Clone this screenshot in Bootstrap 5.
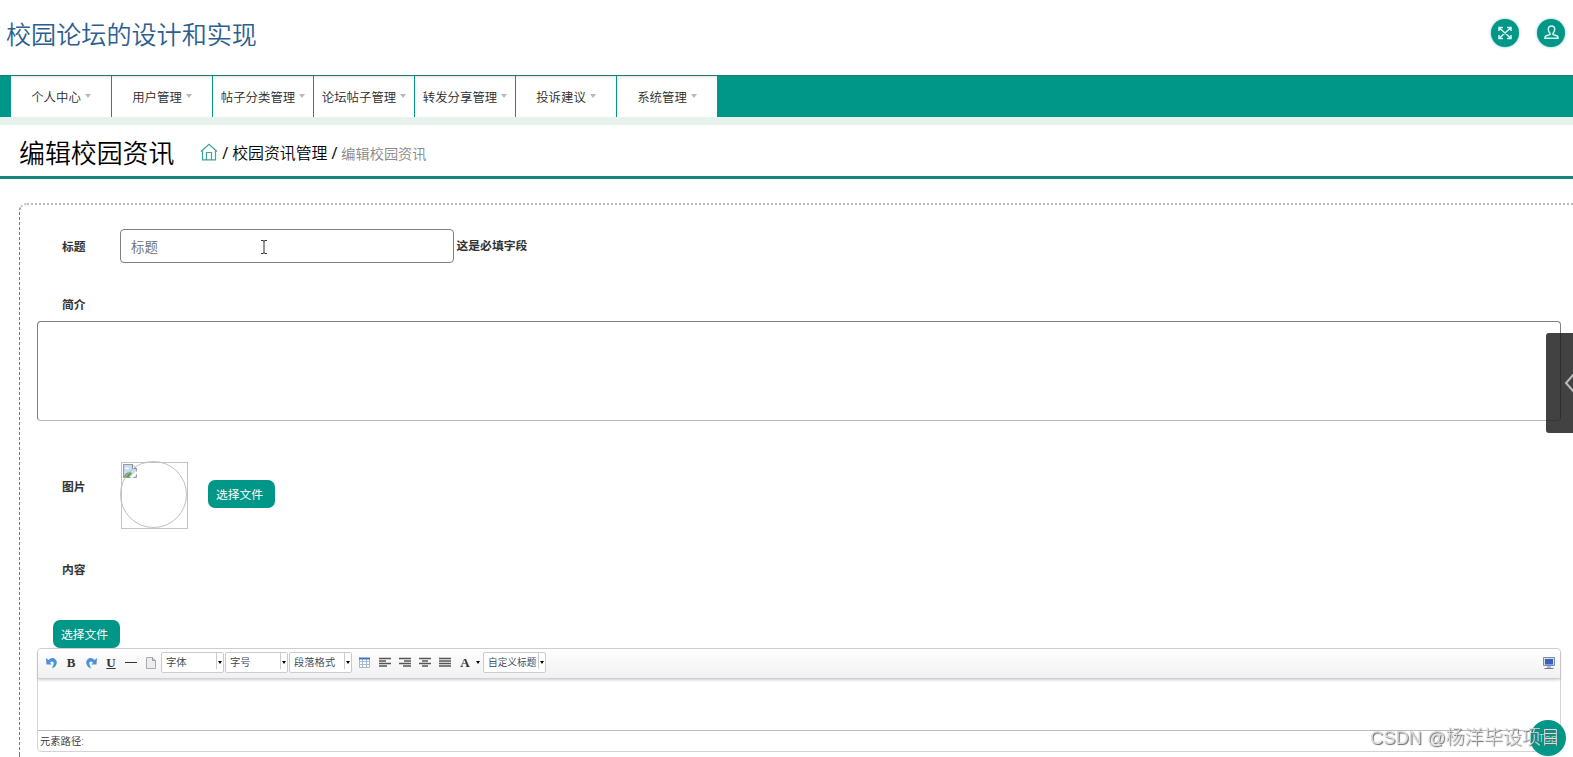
<!DOCTYPE html>
<html lang="zh-CN">
<head>
<meta charset="utf-8">
<meta name="viewport" content="width=device-width, initial-scale=1">
<title>校园论坛的设计和实现</title>
<link href="https://cdn.jsdelivr.net/npm/bootstrap@5.3.0/dist/css/bootstrap.min.css" rel="stylesheet">
<style>
:root{--teal:#009688}
html,body{height:757px;overflow:hidden}
body{font-family:"Open Sans","Noto Sans CJK SC",sans-serif;font-size:12px;line-height:1.5;color:#333;background:#fff;display:flex;flex-direction:column}
svg{display:block;flex:none}
.site-head{height:75px;padding:0 8px 5px 6px;flex:none}
.site-name{font-size:25.1px;font-weight:350;color:#2b5f90;line-height:1}
.round-btn{width:28px;height:28px;background:var(--teal);box-shadow:0 0 3px #00968888;margin-bottom:5px}
.main-nav{height:42px;background:var(--teal);border-top:1px solid #17806f;padding-left:11px;flex:none}
.main-nav .nav-link{width:100px;height:41px;margin-right:1px;padding:3px 0 0 0;background:#fff;color:#2a2a2a;font-size:12.4px;font-weight:350;box-shadow:inset 0 3px 3px -2px #0002}
.main-nav .nav-item:last-child .nav-link{margin-right:0}
.tri{width:0;height:0;border:3.5px solid transparent;border-top:4px solid #b9b9b9;border-bottom:0;margin:-4px 0 0 4px}
.strip{height:8px;background:#e7f2ec;flex:none}
.page-head{height:54px;border-bottom:3px solid #158a7c;padding:7px 0 0 19px;flex:none}
.page-head h1{font-size:25.9px;font-weight:350;color:#000;line-height:1;margin:0 26px 0 0}
.crumb-row{font-size:15.9px;font-weight:350;color:#000;line-height:1;white-space:pre}
.crumb-row .slash{margin:0 4px;font-weight:400}
.crumb-row .current{font-size:14.2px;color:#888}
.panel{flex:1;min-height:0;overflow:hidden;margin:24px 0 0 19px;border:1px dashed #777;border-top:2px dotted #bcbcbc;border-width:2px 0 0 1px;border-radius:8px 0 0 0;padding:24px 0 0 17px}
.lab{font-size:11.8px;font-weight:700;color:#333;line-height:18px;width:83px;padding-left:25px;flex:none}
.title-input{width:334px;height:34px;font-size:13.5px;font-weight:350;border:1px solid #808080;border-radius:4px;padding:1px 10px 0;color:#333}
.title-input::placeholder{color:#6c6c6c}
.must{font-size:11.8px;font-weight:700;margin-left:2.5px}
.ibeam{left:223px;top:10px}
.intro{height:100px;width:1524px;border:1px solid #808080;border-bottom:1.5px solid #bbb;border-radius:4px;resize:none;margin-top:8px}
.thumb{width:67px;height:67px;border:1px solid #c3c3c3;margin-left:1px}
.thumb-ring{left:-2px;top:-2px;width:67px;height:67px;border:1px solid #c0c0c0}
.pick{width:67px;height:28px;background:var(--teal)!important;color:#fff!important;border:0;border-radius:7px;font-size:11.8px;line-height:28px;padding:0 4px 0 0}
.editor{width:1524px;height:104px;border:1px solid #d4d4d4;border-radius:4px;background:#fff}
.tools{height:30px;background:linear-gradient(#fff,#f1f0f2);border-bottom:1px solid #d0d0d0;border-radius:4px 4px 0 0;box-shadow:0 1px 3px #0003;padding:0 4px 2px 3px}
.tool{width:20px;height:20px;font:bold 13px/20px "Liberation Serif",serif;color:#333;flex:none}
.combo{width:63px;height:21px;background:#fff;border:1px solid #ccc;border-radius:2px;font-size:10.3px;color:#34434f;font-weight:350;margin-right:1px;line-height:19px;padding-left:4px}
.combo .txt{width:50px;white-space:nowrap;flex:none}
.combo .arrow{width:8px;height:16px;border-left:1px solid #ccc}
.arrow::after{content:"";border:2.5px solid transparent;border-top:3px solid #000;border-bottom:0}
.combo .arrow::after{margin-top:3px}
.path-row{height:21px;border-top:1px solid #bbb;font-size:10.3px;font-weight:350;line-height:20px;padding-left:2px;color:#333}
.side-tab{right:0;top:333px;width:27px;height:100px;background:rgba(30,30,30,.84);border-radius:3px 0 0 3px}
.top-btn{right:7px;bottom:1px;width:36px;height:36px;background:var(--teal);color:#dff;font-size:11px;font-weight:300}
.watermark{right:13px;bottom:6px;font:300 19.1px/26px "Liberation Sans","Noto Sans CJK SC",sans-serif;color:#ddd;text-shadow:1px 1px 1px #666;white-space:nowrap}
.watermark .latin{font-size:18.3px}
</style>
</head>
<body>
<header class="site-head d-flex align-items-center justify-content-between">
  <div class="site-name">校园论坛的设计和实现</div>
  <div class="d-flex" style="gap:18px">
    <div class="round-btn rounded-circle d-flex align-items-center justify-content-center">
      <svg width="14" height="14" viewBox="0 0 14 14" fill="none" stroke="#d9f5ef" stroke-width="1.500"><path d="M1.500 2l11 10M12.500 2l-11 10M1 5V1.500h4M9 1.500h4V5M13 9v3.500H9M5 12.500H1V9"/></svg>
    </div>
    <div class="round-btn rounded-circle d-flex align-items-center justify-content-center">
      <svg width="15" height="15" viewBox="0 0 15 15" fill="none" stroke="#d9f5ef" stroke-width="1.500"><path d="M7.500 1C5.200 1 4.200 2.600 4.300 4.500c.1 1.700.7 2.800 1.700 3.700v1.200L1.800 11c-.6.300-.9 1-.9 2.200h13.200c0-1.200-.3-1.900-.9-2.200L9 9.400V8.200c1-.9 1.600-2 1.700-3.700C10.800 2.600 9.800 1 7.500 1z"/></svg>
    </div>
  </div>
</header>
<nav class="main-nav">
  <ul class="nav flex-nowrap">
    <li class="nav-item"><a class="nav-link d-flex align-items-center justify-content-center">个人中心<i class="tri"></i></a></li>
    <li class="nav-item"><a class="nav-link d-flex align-items-center justify-content-center">用户管理<i class="tri"></i></a></li>
    <li class="nav-item"><a class="nav-link d-flex align-items-center justify-content-center">帖子分类管理<i class="tri"></i></a></li>
    <li class="nav-item"><a class="nav-link d-flex align-items-center justify-content-center">论坛帖子管理<i class="tri"></i></a></li>
    <li class="nav-item"><a class="nav-link d-flex align-items-center justify-content-center">转发分享管理<i class="tri"></i></a></li>
    <li class="nav-item"><a class="nav-link d-flex align-items-center justify-content-center">投诉建议<i class="tri"></i></a></li>
    <li class="nav-item"><a class="nav-link d-flex align-items-center justify-content-center">系统管理<i class="tri"></i></a></li>
  </ul>
</nav>
<div class="strip"></div>
<div class="page-head d-flex align-items-center">
  <h1>编辑校园资讯</h1>
  <div class="crumb-row d-flex align-items-center">
    <svg class="mb-1" width="18" height="18" viewBox="0 0 18 18" fill="none" stroke="#3fa596" stroke-width="1.200"><path d="M1 8.500L9 1.200l8 7.300M2.500 7.500v9.300h13V7.500M6.500 16.800V9.500h5v7.300"/></svg>
    <span class="slash">/</span><span>校园资讯管理</span><span class="slash">/</span><span class="current">编辑校园资讯</span>
  </div>
</div>
<main class="panel">
  <div class="d-flex align-items-center position-relative">
    <label class="lab">标题</label>
    <input class="title-input" placeholder="标题">
    <span class="must">这是必填字段</span>
    <svg class="ibeam position-absolute" width="8" height="16" viewBox="0 0 8 16" fill="none" stroke="#333" stroke-width="1"><path d="M1 1.500h2l1 .7 1-.7h2M4 2v12M1 14.500h2l1-.7 1 .7h2"/></svg>
  </div>
  <div class="lab" style="margin-top:32px">简介</div>
  <textarea class="intro d-block"></textarea>
  <div class="d-flex" style="margin-top:41px">
    <div class="lab" style="padding-top:15px">图片</div>
    <div class="thumb position-relative">
      <svg width="16" height="16" viewBox="0 0 16 16"><path d="M1.500 1.500h9l4 4v9h-13z" fill="#c8daf5" stroke="#999"/><path d="M10.500 1.500v4h4" fill="#fff" stroke="#888"/><path d="M3 6c0-2 4-2 4 0z" fill="#fff"/><path d="M2 14c1-4 5-6 8-4l-3 4z" fill="#4ca53d"/><path d="M15 9l-6 6" stroke="#fff" stroke-width="2.500"/></svg>
      <div class="thumb-ring position-absolute rounded-circle"></div>
    </div>
    <button class="btn pick" style="margin:18px 0 0 20px">选择文件</button>
  </div>
  <div class="lab" style="margin-top:31px">内容</div>
  <button class="btn pick d-block" style="margin:42px 0 0 16px">选择文件</button>
  <div class="editor d-flex flex-column">
    <div class="tools d-flex align-items-center">
      <svg width="20" height="14" viewBox="-4 0 20 14"><path d="M1 2l.5 6.500h5L5 6.500c2-2 4.500-1 3.500 2l-1.500 4c4-1.500 6-5.500 4-8.500S5.500 1.500 3.500 4z" fill="#4b93d8"/></svg>
      <span class="tool text-center">B</span>
      <svg width="20" height="14" viewBox="-3 0 20 14"><path d="M13 2l-.5 6.500h-5L9 6.500c-2-2-4.500-1-3.500 2l1.500 4C3 11 1 7 3 4s5.500-2.500 7.500 0z" fill="#4b93d8"/></svg>
      <span class="tool text-center text-decoration-underline">U</span>
      <svg width="20" height="14" viewBox="0 0 20 14"><path d="M4 6.500h12" stroke="#333"/></svg>
      <svg width="20" height="14" viewBox="0 0 20 14"><path d="M5.500 1.500h6l3 3v8h-9z" fill="#ececf2" stroke="#aaa"/><path d="M11.500 1.500v3h3" fill="#ddd" stroke="#999"/></svg>
      <div class="combo d-flex"><span class="txt">字体</span><span class="arrow d-flex align-items-center justify-content-center"></span></div>
      <div class="combo d-flex"><span class="txt">字号</span><span class="arrow d-flex align-items-center justify-content-center"></span></div>
      <div class="combo d-flex"><span class="txt">段落格式</span><span class="arrow d-flex align-items-center justify-content-center"></span></div>
      <svg width="22" height="14" viewBox="0 0 22 14"><path d="M6.500 2.500h10v9h-10zM6 5.500h11M6 8.500h11M9.500 3v9M13.500 3v9" fill="#fff" stroke="#a5b8d5"/><path d="M6 2.500h11" stroke="#4774bd" stroke-width="2"/></svg>
      <svg width="80" height="14" viewBox="-1 0 80 14" stroke="#555" stroke-width="1.300"><path d="M3 2.500h12M3 5h7M3 7.500h12M3 10h8M23 2.500h12M28 5h7M23 7.500h12M27 10h8M43 2.500h12M46 5h6M43 7.500h12M46 10h6M63 2.500h12M63 5h12M63 7.500h12M63 10h12"/></svg>
      <span class="tool text-center">A</span><span class="arrow d-flex" style="margin:0 3px 0 1px"></span>
      <div class="combo d-flex"><span class="txt" style="font-size:9.7px">自定义标题</span><span class="arrow d-flex align-items-center justify-content-center"></span></div>
      <svg class="ms-auto" width="14" height="14" viewBox="0 0 14 14"><path d="M1.500 1.500h11v8h-11z" fill="#ddd" stroke="#778dac"/><path d="M3 3h8v5.500H3z" fill="#3762c4"/><path d="M5 11h4M2.500 12.500h9" stroke="#647997"/></svg>
    </div>
    <div class="flex-grow-1"></div>
    <div class="path-row">元素路径:</div>
  </div>
</main>
<div class="side-tab position-fixed d-flex align-items-center justify-content-end">
  <svg width="9" height="20" viewBox="0 0 9 20" fill="none" stroke="#bbb" stroke-width="2"><path d="M10 1L2 10l8 9"/></svg>
</div>
<div class="top-btn position-fixed rounded-circle d-flex align-items-center justify-content-center">Top</div>
<div class="watermark position-fixed"><span class="latin">CSDN @</span>杨洋毕设项目</div>
<script src="https://cdn.jsdelivr.net/npm/bootstrap@5.3.0/dist/js/bootstrap.bundle.min.js"></script>
</body>
</html>
